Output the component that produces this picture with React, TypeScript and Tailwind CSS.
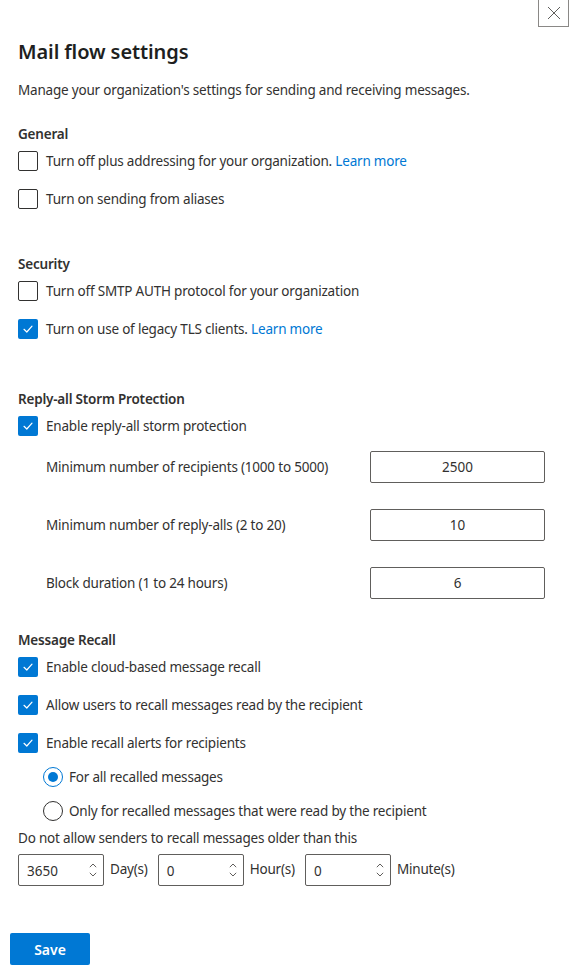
import React from "react";

const Check = () => (
  <svg width="12" height="12" viewBox="0 0 12 12" fill="none">
    <path d="M2 6.3 L4.8 9 L10 3.2" stroke="white" strokeWidth="1.2" strokeLinecap="round" strokeLinejoin="round" />
  </svg>
);

function CheckRow({ checked, children, mt }: { checked?: boolean; children: React.ReactNode; mt: string }) {
  return (
    <div className={`flex items-center h-[20px] ${mt}`}>
      {checked ? (
        <div className="w-[20px] h-[20px] rounded-[2px] bg-[#0078d4] flex items-center justify-center shrink-0">
          <Check />
        </div>
      ) : (
        <div className="w-[20px] h-[20px] rounded-[2px] border border-[#323130] shrink-0" />
      )}
      <span className="ml-[8px] text-[13.5px] tracking-[-0.2px] leading-[20px]">{children}</span>
    </div>
  );
}

function Header({ children, mt }: { children: React.ReactNode; mt: string }) {
  return <div className={`h-[20px] leading-[20px] text-[13.5px] tracking-[-0.2px] font-semibold ${mt}`}>{children}</div>;
}

function InputRow({ label, value, mt }: { label: string; value: string; mt: string }) {
  return (
    <div className={`flex items-center h-[32px] ${mt}`}>
      <div className="w-[352px] pl-[28px] text-[13.5px] tracking-[-0.2px] leading-[20px] whitespace-nowrap">{label}</div>
      <div className="w-[175px] h-[32px] border border-[#605e5c] rounded-[2px] flex items-center justify-center text-[13.5px]">
        {value}
      </div>
    </div>
  );
}

function Radio({ selected, children, mt }: { selected?: boolean; children: React.ReactNode; mt: string }) {
  return (
    <div className={`flex items-center h-[20px] pl-[25px] ${mt}`}>
      {selected ? (
        <div className="w-[20px] h-[20px] rounded-full border border-[#0078d4] flex items-center justify-center shrink-0">
          <div className="w-[10px] h-[10px] rounded-full bg-[#0078d4]" />
        </div>
      ) : (
        <div className="w-[20px] h-[20px] rounded-full border border-[#323130] shrink-0" />
      )}
      <span className="ml-[6px] text-[13.5px] tracking-[-0.2px] leading-[20px]">{children}</span>
    </div>
  );
}

function Spinner({ value }: { value: string }) {
  return (
    <div className="w-[86px] h-[32px] border border-[#605e5c] rounded-[2px] flex items-center justify-between pl-[8px] pr-[6px]">
      <span className="text-[13.5px] mt-[2px]">{value}</span>
      <div className="flex flex-col items-center gap-[4px]">
        <svg width="8" height="5" viewBox="0 0 8 5" fill="none">
          <path d="M0.8 4.2 L4 1 L7.2 4.2" stroke="#605e5c" strokeWidth="1" />
        </svg>
        <svg width="8" height="5" viewBox="0 0 8 5" fill="none">
          <path d="M0.8 0.8 L4 4 L7.2 0.8" stroke="#605e5c" strokeWidth="1" />
        </svg>
      </div>
    </div>
  );
}

export default function App() {
  return (
    <div className="w-[575px] min-h-[976px] bg-white text-[#323130] font-['Segoe_UI','Noto_Sans',sans-serif]">
      <div className="flex justify-end pr-[6px]">
        <button className="w-[31px] h-[27px] border border-[#8a8886] border-t-0 flex items-center justify-center">
          <svg width="14" height="14" viewBox="0 0 14 14" fill="none">
            <path d="M1 1 L13 13 M13 1 L1 13" stroke="#605e5c" strokeWidth="1" />
          </svg>
        </button>
      </div>
      <div className="px-[18px]">
        <h1 className="mt-[11px] h-[28px] leading-[28px] text-[20px] tracking-[-0.1px] font-semibold text-[#201f1e]">Mail flow settings</h1>
        <p className="mt-[14px] h-[20px] leading-[20px] text-[13.5px] tracking-[-0.2px]">
          Manage your organization's settings for sending and receiving messages.
        </p>

        <Header mt="mt-[24px]">General</Header>
        <CheckRow mt="mt-[7px]">
          Turn off plus addressing for your organization. <span className="text-[#0078d4]">Learn more</span>
        </CheckRow>
        <CheckRow mt="mt-[18px]">Turn on sending from aliases</CheckRow>

        <Header mt="mt-[45px]">Security</Header>
        <CheckRow mt="mt-[7px]">Turn off SMTP AUTH protocol for your organization</CheckRow>
        <CheckRow checked mt="mt-[18px]">
          Turn on use of legacy TLS clients. <span className="text-[#0078d4]">Learn more</span>
        </CheckRow>

        <Header mt="mt-[50px]">Reply-all Storm Protection</Header>
        <CheckRow checked mt="mt-[7px]">Enable reply-all storm protection</CheckRow>
        <InputRow mt="mt-[15px]" label="Minimum number of recipients (1000 to 5000)" value="2500" />
        <InputRow mt="mt-[26px]" label="Minimum number of reply-alls (2 to 20)" value="10" />
        <InputRow mt="mt-[26px]" label="Block duration (1 to 24 hours)" value="6" />

        <Header mt="mt-[31px]">Message Recall</Header>
        <CheckRow checked mt="mt-[7px]">Enable cloud-based message recall</CheckRow>
        <CheckRow checked mt="mt-[18px]">Allow users to recall messages read by the recipient</CheckRow>
        <CheckRow checked mt="mt-[18px]">Enable recall alerts for recipients</CheckRow>
        <Radio selected mt="mt-[14px]">For all recalled messages</Radio>
        <Radio mt="mt-[14px]">Only for recalled messages that were read by the recipient</Radio>
        <div className="mt-[7px] h-[20px] leading-[20px] text-[13.5px] tracking-[-0.2px]">Do not allow senders to recall messages older than this</div>
        <div className="mt-[6px] flex items-center">
          <Spinner value="3650" />
          <span className="ml-[6px] mr-[10px] text-[13.5px] tracking-[-0.2px] -mt-[2px]">Day(s)</span>
          <Spinner value="0" />
          <span className="ml-[6px] mr-[10px] text-[13.5px] tracking-[-0.2px] -mt-[2px]">Hour(s)</span>
          <Spinner value="0" />
          <span className="ml-[6px] text-[13.5px] tracking-[-0.2px] -mt-[2px]">Minute(s)</span>
        </div>
      </div>
      <div className="pl-[10px] mt-[47px] pb-[11px]">
        <button className="w-[80px] h-[32px] bg-[#0078d4] rounded-[2px] text-white text-[14px] font-semibold">Save</button>
      </div>
    </div>
  );
}
